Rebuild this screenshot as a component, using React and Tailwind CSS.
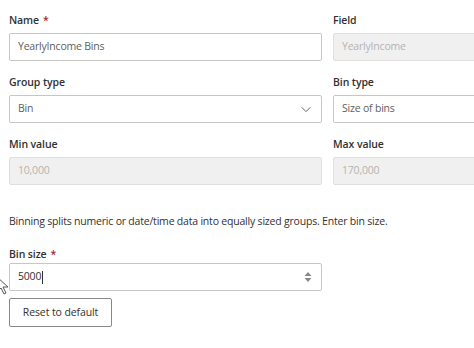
import React from "react";

const label = "block h-4 leading-4 text-[10.5px] font-semibold text-[#323130] tracking-[-0.1px] mb-[5px]";
const box = "h-[28px] border border-[#c8c6c4] rounded-[2px] px-2 flex items-center text-[10.5px] tracking-[-0.2px]";

function Field({ title, required, value, disabled, chevron, className = "" }) {
  return (
    <div className={className}>
      <span className={label}>
        {title}
        {required && <span className="text-[#a4262c] ml-1">*</span>}
      </span>
      <div
        className={[
          box,
          disabled ? "bg-[#f0f0f0] border-[#e1dfdd] text-[#b5b3b1]" : "bg-white text-[#605e5c]",
          chevron ? "justify-between" : "",
        ].join(" ")}
      >
        <span>{value}</span>
        {chevron && (
          <svg width="14" height="14" viewBox="0 0 16 16" fill="none" stroke="#605e5c" strokeWidth="1.1">
            <path d="M3 6l5 5 5-5" />
          </svg>
        )}
      </div>
    </div>
  );
}

export default function App() {
  return (
    <div
      className="relative w-[474px] h-[348px] overflow-hidden bg-white pl-[9px] pt-3"
      style={{ fontFamily: '"Open Sans", "Noto Sans", sans-serif' }}
    >
      <div className="grid grid-cols-[313px_313px] gap-x-[11px] gap-y-[13px]">
        <Field title="Name" required value="YearlyIncome Bins" />
        <Field title="Field" value="YearlyIncome" disabled />
        <Field title="Group type" value="Bin" chevron />
        <Field title="Bin type" value="Size of bins" />
        <Field title="Min value" value="10,000" disabled />
        <Field title="Max value" value="170,000" disabled />
      </div>

      <p className="mt-[28px] text-[10.5px] leading-4 text-[#323130] tracking-[-0.2px]">
        Binning splits numeric or date/time data into equally sized groups. Enter bin size.
      </p>

      <div className="mt-[17px] w-[313px]">
        <span className={label + " !mb-[1px]"}>
          Bin size<span className="text-[#a4262c] ml-1">*</span>
        </span>
        <div className={box + " bg-white justify-between text-[#323130] border-[#8a8886]"}>
          <span>
            5000<span className="inline-block w-px h-[13px] bg-[#323130] align-middle ml-px" />
          </span>
          <svg width="10" height="14" viewBox="0 0 10 14" fill="#8a8886">
            <path d="M5 2l3.5 4h-7z" />
            <path d="M5 12l3.5-4h-7z" />
          </svg>
        </div>
        <button className="mt-[7px] h-[29px] w-[103px] border border-[#8a8886] rounded-[2px] bg-white text-[10.5px] tracking-[-0.1px] text-[#323130]">
          Reset to default
        </button>
      </div>

      <svg className="absolute left-[-4px] top-[276px]" width="14" height="20" viewBox="0 0 14 20">
        <path d="M1 1v15l4-4 3 6 2-1-3-6h5z" fill="white" stroke="#555" strokeWidth="1" />
      </svg>
    </div>
  );
}
